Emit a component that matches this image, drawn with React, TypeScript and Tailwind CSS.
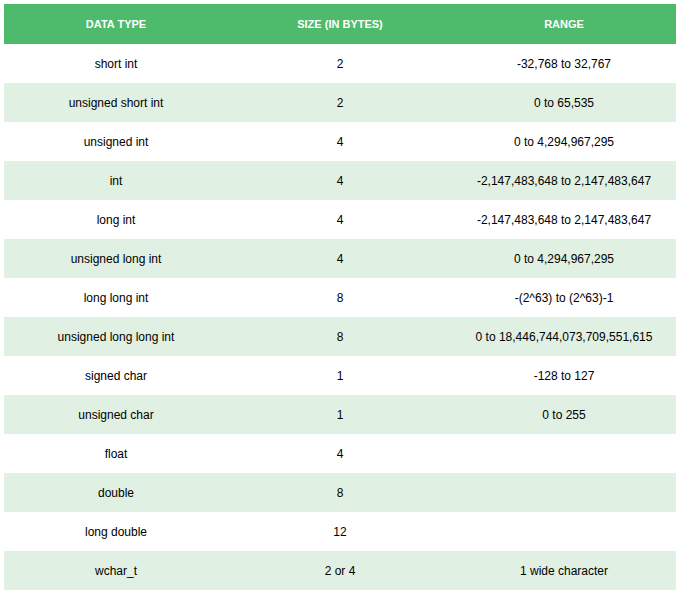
import React from 'react';

type Row = { type: string; size: string; range: string };

const rows: Row[] = [
  { type: 'short int', size: '2', range: '-32,768 to 32,767' },
  { type: 'unsigned short int', size: '2', range: '0 to 65,535' },
  { type: 'unsigned int', size: '4', range: '0 to 4,294,967,295' },
  { type: 'int', size: '4', range: '-2,147,483,648 to 2,147,483,647' },
  { type: 'long int', size: '4', range: '-2,147,483,648 to 2,147,483,647' },
  { type: 'unsigned long int', size: '4', range: '0 to 4,294,967,295' },
  { type: 'long long int', size: '8', range: '-(2^63) to (2^63)-1' },
  { type: 'unsigned long long int', size: '8', range: '0 to 18,446,744,073,709,551,615' },
  { type: 'signed char', size: '1', range: '-128 to 127' },
  { type: 'unsigned char', size: '1', range: '0 to 255' },
  { type: 'float', size: '4', range: '' },
  { type: 'double', size: '8', range: '' },
  { type: 'long double', size: '12', range: '' },
  { type: 'wchar_t', size: '2 or 4', range: '1 wide character' },
];

const App: React.FC = () => {
  return (
    <div className="bg-white p-1 font-['Liberation_Sans',Arial,sans-serif]">
      <table className="w-[672px] table-fixed border-collapse text-center">
        <thead>
          <tr className="h-10 bg-[#4dba6c] text-white text-[11px] font-bold uppercase">
            <th className="w-[224px]">Data Type</th>
            <th className="w-[224px]">Size (in bytes)</th>
            <th className="w-[224px]">Range</th>
          </tr>
        </thead>
        <tbody className="text-[12px] text-black">
          {rows.map((row, i) => (
            <tr key={row.type} className={`h-[39px] ${i % 2 === 1 ? 'bg-[#e0f0e2]' : 'bg-white'}`}>
              <td>{row.type}</td>
              <td>{row.size}</td>
              <td>{row.range}</td>
            </tr>
          ))}
        </tbody>
      </table>
    </div>
  );
};

export default App;
